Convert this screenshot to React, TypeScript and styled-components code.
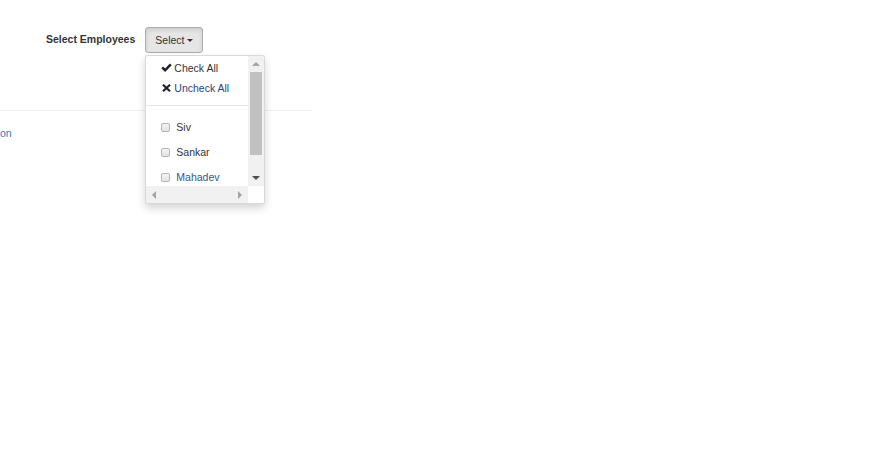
import { FC } from "react";
import styled, { createGlobalStyle } from "styled-components";

const GlobalStyle = createGlobalStyle`
  html, body {
    margin: 0;
    padding: 0;
    background: #fff;
  }
  body {
    font-family: "Liberation Sans", Arial, Helvetica, sans-serif;
    font-size: 10.5px;
    line-height: 15px;
    color: #333;
  }
`;

const Page = styled.div`
  width: 876px;
  height: 456px;
  overflow: hidden;
`;

const FormRow = styled.div`
  display: flex;
  align-items: center;
  padding: 27px 0 0 46px;
`;

const Label = styled.label`
  font-weight: bold;
  margin-right: 10px;
  margin-top: -2px;
`;

const DropdownWrap = styled.div`
  position: relative;
`;

const ToggleButton = styled.button`
  display: flex;
  align-items: center;
  gap: 3px;
  height: 26px;
  padding: 0 9px 0 9px;
  font-family: inherit;
  font-size: 10.5px;
  color: #333;
  background: #e6e6e6;
  border: 1px solid #adadad;
  border-radius: 3px;
  box-shadow: inset 0 2px 4px rgba(0, 0, 0, 0.125);
  cursor: pointer;
`;

const Caret = styled.span`
  display: inline-block;
  width: 0;
  height: 0;
  margin-top: 1px;
  border-top: 3px solid #333;
  border-left: 3px solid transparent;
  border-right: 3px solid transparent;
`;

const Menu = styled.div`
  position: absolute;
  top: 28px;
  left: 0;
  z-index: 10;
  width: 118px;
  height: 147px;
  display: grid;
  grid-template-columns: 1fr 16px;
  grid-template-rows: 1fr 17px;
  background: #fff;
  border: 1px solid rgba(0, 0, 0, 0.15);
  border-radius: 3px;
  box-shadow: 0 4px 9px rgba(0, 0, 0, 0.175);
  overflow: hidden;
`;

const MenuBody = styled.ul`
  list-style: none;
  margin: 0;
  padding: 2px 0 0 0;
  overflow: hidden;
`;

const ActionItem = styled.li<{ $color?: string }>`
  display: flex;
  align-items: center;
  gap: 2px;
  height: 20px;
  padding-left: 15px;
  white-space: nowrap;
  color: ${(p) => p.$color || "#333"};
`;

const Divider = styled.li`
  height: 1px;
  margin: 7px 0 9px 0;
  background: #e5e5e5;
`;

const OptionItem = styled.li<{ $color?: string }>`
  display: flex;
  align-items: center;
  gap: 6px;
  height: 25px;
  padding-left: 15px;
  white-space: nowrap;
  color: ${(p) => p.$color || "#333"};
`;

const Checkbox = styled.span`
  width: 7px;
  height: 7px;
  border: 1px solid #b5b5b5;
  border-radius: 2px;
  background: linear-gradient(#f4f4f4, #e2e2e2);
`;

const VScroll = styled.div`
  display: flex;
  flex-direction: column;
  background: #f1f1f1;
`;

const HScroll = styled.div`
  display: flex;
  align-items: center;
  background: #f1f1f1;
`;

const ArrowBox = styled.div`
  display: flex;
  align-items: center;
  justify-content: center;
  width: 16px;
  height: 16px;
  flex: none;
`;

const Track = styled.div`
  flex: 1;
  display: flex;
  flex-direction: column;
  align-items: center;
`;

const Thumb = styled.div`
  width: 12px;
  height: 83px;
  background: #c1c1c1;
`;

const Corner = styled.div`
  background: #fff;
`;

const Arrow = styled.span<{ $dir: "up" | "down" | "left" | "right"; $color: string }>`
  width: 0;
  height: 0;
  border-style: solid;
  border-color: transparent;
  ${(p) =>
    p.$dir === "up"
      ? `border-width: 0 4px 4px 4px; border-bottom-color: ${p.$color};`
      : p.$dir === "down"
      ? `border-width: 4px 4px 0 4px; border-top-color: ${p.$color};`
      : p.$dir === "left"
      ? `border-width: 4px 4px 4px 0; border-right-color: ${p.$color};`
      : `border-width: 4px 0 4px 4px; border-left-color: ${p.$color};`}
`;

const Separator = styled.hr`
  width: 312px;
  margin: 57px 0 0 0;
  border: 0;
  border-top: 1px solid #eee;
`;

const Link = styled.a`
  display: block;
  margin-top: 15px;
  color: #337ab7;
  text-decoration: none;
`;

const CheckIcon: FC = () => (
  <svg width="11" height="10" viewBox="0 0 11 10">
    <path d="M0.3 5.2 L2.1 3.4 L4.1 5.4 L8.9 0.5 L10.7 2.3 L4.1 9 Z" fill="#222" />
  </svg>
);

const RemoveIcon: FC = () => (
  <svg width="11" height="10" viewBox="0 0 11 10">
    <path
      d="M1.2 2.4 L2.7 0.9 L5.5 3.6 L8.3 0.9 L9.8 2.4 L7 5 L9.8 7.6 L8.3 9.1 L5.5 6.4 L2.7 9.1 L1.2 7.6 L4 5 Z"
      fill="#222"
    />
  </svg>
);

const employees = [
  { name: "Siv" },
  { name: "Sankar" },
  { name: "Mahadev", color: "#34598c" },
];

const App: FC = () => {
  return (
    <Page>
      <GlobalStyle />
      <FormRow>
        <Label>Select Employees</Label>
        <DropdownWrap>
          <ToggleButton>
            Select <Caret />
          </ToggleButton>
          <Menu>
            <MenuBody>
              <ActionItem>
                <CheckIcon />
                Check All
              </ActionItem>
              <ActionItem $color="#2e4270">
                <RemoveIcon />
                Uncheck All
              </ActionItem>
              <Divider />
              {employees.map((e) => (
                <OptionItem key={e.name} $color={e.color}>
                  <Checkbox />
                  {e.name}
                </OptionItem>
              ))}
            </MenuBody>
            <VScroll>
              <ArrowBox>
                <Arrow $dir="up" $color="#a3a3a3" />
              </ArrowBox>
              <Track>
                <Thumb />
              </Track>
              <ArrowBox>
                <Arrow $dir="down" $color="#505050" />
              </ArrowBox>
            </VScroll>
            <HScroll>
              <ArrowBox>
                <Arrow $dir="left" $color="#a3a3a3" />
              </ArrowBox>
              <Track />
              <ArrowBox>
                <Arrow $dir="right" $color="#a3a3a3" />
              </ArrowBox>
            </HScroll>
            <Corner />
          </Menu>
        </DropdownWrap>
      </FormRow>
      <Separator />
      <Link href="#">on</Link>
    </Page>
  );
};

export default App;
